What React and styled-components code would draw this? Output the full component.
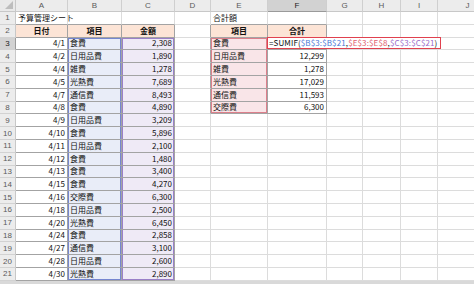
import React from "react";
import styled, { createGlobalStyle } from "styled-components";

const GlobalStyle = createGlobalStyle`
  html, body { margin: 0; padding: 0; background: #ffffff; overflow: hidden; }
  body { font-family: "Noto Sans CJK JP", "Noto Sans", sans-serif; }
`;

const COLS = ["A", "B", "C", "D", "E", "F", "G", "H", "I", "J"];
const WIDTHS = [52, 54, 53, 36, 57, 59, 36, 38, 37, 60];

const GRID = "#dcdcdc";
const TABLE = "#a3a3a3";
const BLUE = "#7586d0";
const PURPLE = "#9a80c8";
const PINK = "#dc7f8b";

const Sheet = styled.div`
  display: grid;
  grid-template-columns: 16px ${WIDTHS.map((w) => w + "px").join(" ")};
  grid-template-rows: 12px;
  grid-auto-rows: 12.8px;
  width: 474px;
  height: 284px;
  overflow: hidden;
  font-size: 8px;
  color: #111;
  background: #d9d9d9;
`;

const Corner = styled.div`
  position: relative;
  background: #e9e9e9;
  border-right: 1px solid #c8c8c8;
  border-bottom: 1px solid #c8c8c8;
  box-sizing: border-box;
  &::after {
    content: "";
    position: absolute;
    right: 2px;
    bottom: 2px;
    border-left: 8px solid transparent;
    border-bottom: 8px solid #bdbdbd;
  }
`;

const ColHeader = styled.div`
  display: flex;
  align-items: center;
  justify-content: center;
  box-sizing: border-box;
  background: ${(p) => (p.$selected ? "#d2d2d2" : "#ececec")};
  color: ${(p) => (p.$selected ? "#222" : "#5a5a5a")};
  border-right: 1px solid #cfcfcf;
  border-bottom: 1px solid ${(p) => (p.$selected ? "#9a9a9a" : "#c8c8c8")};
  font-family: "Liberation Sans", "Noto Sans", sans-serif;
  font-size: 8px;
`;

const RowHeader = styled.div`
  display: flex;
  align-items: center;
  justify-content: center;
  box-sizing: border-box;
  background: ${(p) => (p.$selected ? "#d2d2d2" : "#ececec")};
  color: ${(p) => (p.$selected ? "#222" : "#5a5a5a")};
  border-right: 1px solid ${(p) => (p.$selected ? "#9a9a9a" : "#c8c8c8")};
  border-bottom: 1px solid #d2d2d2;
  font-family: "Liberation Sans", "Noto Sans", sans-serif;
  font-size: 8px;
`;

const Cell = styled.div`
  position: relative;
  display: flex;
  align-items: center;
  justify-content: ${(p) =>
    p.$align === "right" ? "flex-end" : p.$align === "center" ? "center" : "flex-start"};
  box-sizing: border-box;
  padding: 0 2px;
  white-space: nowrap;
  overflow: ${(p) => (p.$overflow ? "visible" : "hidden")};
  background: ${(p) => p.$bg || "#ffffff"};
  border-right: 1px solid ${(p) => p.$right || GRID};
  border-bottom: 1px solid ${(p) => p.$bottom || GRID};
  box-shadow: ${(p) => p.$ring || "none"};
  font-weight: ${(p) => (p.$bold ? 700 : 400)};
  color: ${(p) => p.$ink || "#111"};
  line-height: 1;
  z-index: ${(p) => (p.$overflow ? 2 : "auto")};
`;

const Editor = styled.div`
  position: absolute;
  left: -1px;
  top: -1px;
  height: calc(100% + 1px);
  display: flex;
  align-items: center;
  padding: 0 3px 0 1px;
  box-sizing: border-box;
  background: #ffffff;
  border: 1.5px solid #e0414f;
  white-space: nowrap;
  letter-spacing: 0.12px;
  line-height: 1;
  z-index: 3;
`;

const Ref = styled.span`
  color: ${(p) => p.$color};
`;

const data = [
  ["4/1", "食費", "2,308"],
  ["4/2", "日用品費", "1,890"],
  ["4/4", "雑費", "1,278"],
  ["4/5", "光熱費", "7,689"],
  ["4/7", "通信費", "8,493"],
  ["4/8", "食費", "4,890"],
  ["4/9", "日用品費", "3,209"],
  ["4/10", "食費", "5,896"],
  ["4/11", "日用品費", "2,100"],
  ["4/12", "食費", "1,480"],
  ["4/13", "食費", "3,400"],
  ["4/15", "食費", "4,270"],
  ["4/16", "交際費", "6,300"],
  ["4/18", "日用品費", "2,500"],
  ["4/20", "光熱費", "6,450"],
  ["4/24", "食費", "2,858"],
  ["4/27", "通信費", "3,100"],
  ["4/28", "日用品費", "2,600"],
  ["4/30", "光熱費", "2,890"],
];

const summary = [
  ["食費", null],
  ["日用品費", "12,299"],
  ["雑費", "1,278"],
  ["光熱費", "17,029"],
  ["通信費", "11,593"],
  ["交際費", "6,300"],
];

const PEACH = "#fce4d6";

function inTableLeft(r, c) {
  return r >= 2 && r <= 21 && c >= 0 && c <= 2;
}
function inTableRight(r, c) {
  return r >= 2 && r <= 8 && c >= 4 && c <= 5;
}
function inTable(r, c) {
  return inTableLeft(r, c) || inTableRight(r, c);
}

function ring(color, top, bottom) {
  const parts = [`inset 1px 0 0 ${color}`, `inset -1px 0 0 ${color}`];
  if (top) parts.push(`inset 0 1px 0 ${color}`);
  if (bottom) parts.push(`inset 0 -1px 0 ${color}`);
  return parts.join(", ");
}

function cellProps(r, c) {
  const p = {};
  if (inTable(r, c) || inTable(r, c + 1)) p.$right = TABLE;
  if (inTable(r, c) || inTable(r + 1, c)) p.$bottom = TABLE;
  let text = "";
  if (r === 1 && c === 0) {
    text = "予算管理シート";
    p.$overflow = true;
  }
  if (r === 1 && c === 4) {
    text = "合計額";
    p.$overflow = true;
  }
  if (r === 2) {
    const heads = { 0: "日付", 1: "項目", 2: "金額", 4: "項目", 5: "合計" };
    if (heads[c] !== undefined) {
      text = heads[c];
      p.$bg = PEACH;
      p.$bold = true;
      p.$align = "center";
    }
  }
  if (r >= 3 && r <= 21) {
    const row = data[r - 3];
    if (c === 0) {
      text = row[0];
      p.$align = "right";
    }
    if (c === 1) {
      text = row[1];
      p.$bg = "#e9edf8";
      p.$ring = ring(BLUE, r === 3, r === 21);
    }
    if (c === 2) {
      text = row[2];
      p.$align = "right";
      p.$bg = "#efeaf6";
      p.$ring = ring(PURPLE, r === 3, r === 21);
    }
  }
  if (r >= 3 && r <= 8) {
    const row = summary[r - 3];
    if (c === 4) {
      text = row[0];
      p.$bg = "#f9e5e8";
      p.$ring = ring(PINK, r === 3, r === 8);
    }
    if (c === 5) {
      if (row[1]) {
        text = row[1];
        p.$align = "right";
      } else {
        p.$overflow = true;
        p.editor = true;
      }
    }
  }
  return { p, text };
}

function Formula() {
  return (
    <Editor>
      =SUMIF(<Ref $color="#4a78d6">$B$3:$B$21</Ref>,
      <Ref $color="#e0606e">$E$3:$E$8</Ref>,
      <Ref $color="#9a6cc9">$C$3:$C$21</Ref>)
    </Editor>
  );
}

export default function App() {
  const rows = [];
  for (let r = 1; r <= 21; r++) {
    rows.push(
      <RowHeader key={`rh${r}`} $selected={r === 3}>
        {r}
      </RowHeader>
    );
    for (let c = 0; c < COLS.length; c++) {
      const { p, text } = cellProps(r, c);
      const { editor, ...styleProps } = p;
      rows.push(
        <Cell key={`${r}-${c}`} {...styleProps}>
          {editor ? <Formula /> : text}
        </Cell>
      );
    }
  }
  return (
    <>
      <GlobalStyle />
      <Sheet>
        <Corner />
        {COLS.map((col) => (
          <ColHeader key={col} $selected={col === "F"}>
            {col}
          </ColHeader>
        ))}
        {rows}
      </Sheet>
    </>
  );
}
